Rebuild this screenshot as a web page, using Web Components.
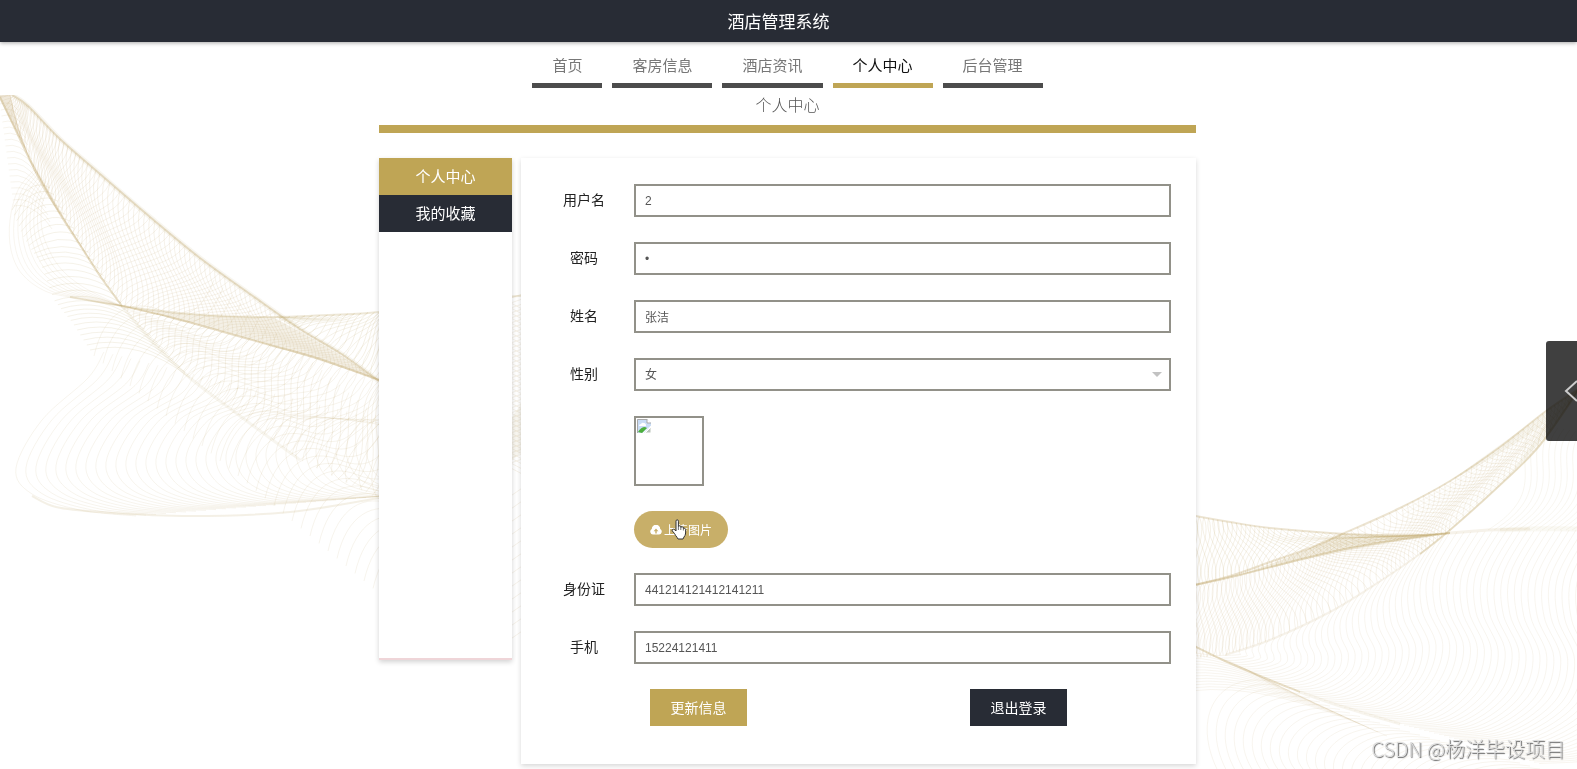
<!DOCTYPE html>
<html lang="zh-CN">
<head>
<meta charset="utf-8">
<meta name="viewport" content="width=device-width, initial-scale=1">
<title>酒店管理系统</title>
<style>
  :root {
    --gold: #bfa555;
    --dark: #282c35;
    --line: #929189;
    --sans: "Noto Sans CJK SC", "Noto Sans", sans-serif;
  }

  body {
    margin: 0;
    background: #fff;
    font-family: var(--sans);
  }

  main {
    width: 94%;
    max-width: 817px;
    margin: 0 auto;
    padding-right: 2px;
  }

  .columns {
    display: flex;
    align-items: flex-start;
    gap: 9px;
    padding-bottom: 5px;
  }

  form-card {
    flex: 1;
  }
</style>
</head>
<body>
  <wave-background></wave-background>
  <hotel-header>酒店管理系统</hotel-header>
  <main>
    <hotel-nav></hotel-nav>
    <page-title>个人中心</page-title>
    <div class="columns">
      <side-menu></side-menu>
      <form-card>
        <form-row label="用户名" value="2"></form-row>
        <form-row label="密码" type="password" value="2"></form-row>
        <form-row label="姓名" value="张洁"></form-row>
        <form-row label="性别" type="select" value="女" options="女,男"></form-row>
        <avatar-upload></avatar-upload>
        <form-row label="身份证" value="441214121412141211"></form-row>
        <form-row label="手机" value="15224121411"></form-row>
        <form-actions slot="actions"></form-actions>
      </form-card>
    </div>
  </main>
  <drawer-toggle></drawer-toggle>
  <water-mark>CSDN @杨洋毕设项目</water-mark>

<script>
// Shared helper: open shadow root filled from a template
function render(el, html) {
  const template = document.createElement('template');
  template.innerHTML = html;
  const root = el.attachShadow({ mode: 'open' });
  root.appendChild(template.content.cloneNode(true));
  return root;
}

/* ---------- Background ---------- */

// Smooth path through a list of points (Catmull-Rom to Bezier)
function smooth(pts) {
  let d = `M${pts[0][0].toFixed(1)} ${pts[0][1].toFixed(1)}`;
  for (let i = 0; i < pts.length - 1; i++) {
    const p0 = pts[i - 1] || pts[i];
    const p1 = pts[i];
    const p2 = pts[i + 1];
    const p3 = pts[i + 2] || p2;
    const c = [
      p1[0] + (p2[0] - p0[0]) / 6, p1[1] + (p2[1] - p0[1]) / 6,
      p2[0] - (p3[0] - p1[0]) / 6, p2[1] - (p3[1] - p1[1]) / 6,
      p2[0], p2[1]
    ];
    d += 'C' + c.map((n) => n.toFixed(1)).join(' ');
  }
  return d;
}

// Point on a polyline, t from 0 to 1
function at(pts, t) {
  const f = Math.max(0, Math.min(1, t)) * (pts.length - 1);
  const i = Math.min(pts.length - 2, Math.floor(f));
  const k = f - i;
  return [
    pts[i][0] + (pts[i + 1][0] - pts[i][0]) * k,
    pts[i][1] + (pts[i + 1][1] - pts[i][1]) * k
  ];
}

// Height of a left-to-right polyline at x
function heightAt(pts, x) {
  for (let i = 0; i < pts.length - 1; i++) {
    if (x <= pts[i + 1][0]) {
      const k = (x - pts[i][0]) / (pts[i + 1][0] - pts[i][0]);
      return pts[i][1] + (pts[i + 1][1] - pts[i][1]) * k;
    }
  }
  return pts[pts.length - 1][1];
}

// Threads that cross from edge a to edge b, leaning by `lean`, bent by `bow`
function threads(a, b, count, lean, bow) {
  let d = '';
  for (let i = 0; i <= count; i++) {
    const t = i / count;
    const p = at(a, t);
    const q = at(b, t + lean * Math.sin(Math.PI * t));
    const dx = q[0] - p[0];
    const dy = q[1] - p[1];
    const c1 = [p[0] + dx * 0.33 - dy * bow, p[1] + dy * 0.33 + dx * bow];
    const c2 = [p[0] + dx * 0.66 + dy * bow, p[1] + dy * 0.66 - dx * bow];
    d += `M${p[0].toFixed(1)} ${p[1].toFixed(1)}C${[...c1, ...c2, ...q].map((n) => n.toFixed(1)).join(' ')}`;
  }
  return d;
}

// Steps between two curves with the same number of points
function blend(a, b, count) {
  let d = '';
  for (let i = 0; i <= count; i++) {
    const t = i / count;
    d += smooth(a.map((p, k) => [p[0] + (b[k][0] - p[0]) * t, p[1] + (b[k][1] - p[1]) * t]));
  }
  return d;
}

function drawWaves() {
  const out = [];
  const line = (d, opacity, width = 1) =>
    out.push(`<path d="${d}" stroke-opacity="${opacity}" stroke-width="${width}"/>`);
  const fill = (d, opacity) =>
    out.push(`<path d="${d}" fill="#bfa56a" fill-opacity="${opacity}" stroke="none"/>`);

  // left ribbon
  const ridge = [[12, 95], [28, 106], [60, 139], [100, 174], [150, 217], [200, 258], [250, 294], [300, 329], [340, 353], [379, 381]];
  const spine = [[0, 97], [18, 135], [35, 170], [60, 214], [80, 245], [100, 276], [122, 306]];
  const under = [[0, 97], [35, 170], [60, 214], [90, 262], [122, 306], [170, 318], [220, 331], [270, 345], [320, 360], [379, 381]];
  const inner = [[10, 95], [18, 128], [30, 160], [42, 186], [60, 214]];
  line(threads(ridge, under, 90, 0.12, 0.16), 0.14);
  line(threads(ridge, under, 90, -0.12, -0.14), 0.13);
  line(smooth(ridge), 0.34, 2);
  line(smooth(ridge), 0.1, 5);
  line(smooth(spine), 0.36, 2);
  line(smooth(inner), 0.25);
  fill('M0 95L10 95Q24 160 60 214Q90 262 122 306Q60 220 0 100Z', 0.25);

  // arcs left of the spine
  let d = '';
  for (let i = 0; i < 18; i++) {
    d += `M${i * 0.8} ${104 + i * 6}Q${10 + i * 1.4} ${100 + i * 6} ${18 + i * 2} ${110 + i * 7}`;
  }
  line(d, 0.12);
  const blobOut = [[34, 170], [18, 190], [10, 220], [11, 250], [22, 274], [45, 291], [75, 298], [122, 306]];
  const blobIn = [[50, 185], [42, 205], [42, 230], [50, 252], [62, 270], [80, 285], [100, 296], [122, 306]];
  line(blend(blobOut, blobIn, 8), 0.11);
  const arcStart = [[12, 210], [25, 240], [40, 262], [54, 300], [72, 322], [90, 350]];
  const arcEnd = [[50, 188], [72, 225], [100, 270], [124, 308], [160, 345], [190, 378]];
  d = '';
  for (let i = 0; i <= 28; i++) {
    const p = at(arcStart, i / 28);
    const q = at(arcEnd, i / 28);
    d += `M${p[0]} ${p[1]}Q${p[0] + (q[0] - p[0]) * 0.5} ${Math.min(p[1], q[1]) - 12} ${q[0]} ${q[1]}`;
  }
  line(d, 0.15);

  // flat edge and its wedge
  const flat = [[70, 297], [122, 306], [170, 312], [220, 316], [275, 317], [330, 315], [379, 312], [450, 302], [530, 295]];
  const slope = [[122, 306], [170, 317], [220, 331], [270, 345], [320, 359], [379, 380]];
  line(smooth(flat), 0.26, 2);
  line(smooth(slope), 0.38, 2);
  fill('M122 306Q190 317 273 317Q325 345 379 380Q290 350 200 325Z', 0.17);
  const corner = [[275, 317], [300, 329], [340, 353], [379, 380]];
  line(threads([[275, 317], [330, 315], [379, 312], [400, 309]], corner, 22, 0.1, 0.15), 0.17);
  line(threads([[275, 317], [330, 315], [379, 312], [400, 309]], corner, 22, -0.2, -0.12), 0.15);

  // lower mesh
  const fold = [[122, 306], [155, 345], [190, 378], [240, 416], [300, 460], [392, 505]];
  line(threads([...slope, [400, 388]], fold, 44, 0.12, 0.22), 0.14);
  line(threads([...slope, [400, 388]], fold, 44, -0.14, -0.28), 0.12);
  line(smooth(fold.slice(0, 5)), 0.1, 3);

  // loops opening towards the panel
  d = '';
  for (let i = 0; i < 36; i++) {
    const x = 16 + i * 10;
    const y = 468 - i * 0.6;
    d += smooth([
      [104 + i * 9, 352 + i * 2.2],
      [88 + i * 9.4, 378 + i * 1.5],
      [42 + i * 9.8, 420],
      [x, y],
      [x + 16, 494 - i * 0.4],
      [x + 64, 510 - i * 0.5],
      [x + 120, 516 - i * 0.8]
    ]);
  }
  line(d, 0.12);
  line(smooth([[32, 496], [56, 507], [100, 512], [190, 516], [290, 512], [379, 498]]), 0.17, 2);

  // swirls and the tail
  d = '';
  for (let i = 0; i < 32; i++) {
    const x = 94 + i * 9;
    const y = 356 + i * 7.5;
    d += `M${x} ${y}C${x + 10} ${y - 44} ${x + 36} ${y - 58} ${x + 66} ${y - 46}S${x + 110} ${y - 50} ${x + 120} ${y - 76}`;
  }
  line(d, 0.12);

  // strip between the two panels
  d = '';
  for (let i = 0; i < 34; i++) {
    d += `M505 ${300 + i * 5}L528 ${292 + i * 5}M505 ${300 + i * 5}L528 ${312 + i * 5}`;
  }
  for (let i = 0; i < 12; i++) {
    d += `M505 ${500 + i * 13}L528 ${484 + i * 13}`;
  }
  line(d, 0.14);
  fill('M510 420L524 400V450L510 462Z', 0.1);

  // right ribbons
  const rTop = [[1190, 515], [1230, 522], [1270, 528], [1330, 533], [1380, 535], [1420, 535], [1450, 533]];
  const rMid = [[1190, 586], [1240, 575], [1290, 562], [1340, 550], [1390, 541], [1420, 537], [1450, 533]];
  line(threads(rTop, rMid, 52, 0.14, 0.16), 0.16);
  line(threads(rTop, rMid, 52, -0.14, -0.16), 0.16);
  line(smooth(rTop), 0.3, 2);
  line(smooth(rMid), 0.36, 2);
  line('M1450 533Q1490 529 1530 529', 0.14, 3);
  line('M1500 530Q1540 528 1577 529', 0.07, 5);
  fill('M1340 534Q1400 536 1450 533Q1330 550 1196 587Q1280 565 1340 534Z', 0.18);

  const rUp = [[1190, 586], [1230, 576], [1270, 562], [1310, 548], [1340, 535], [1400, 508], [1450, 481], [1500, 447], [1546, 411], [1580, 388]];
  const rLow = [[1180, 660], [1225, 655], [1270, 640], [1330, 612], [1385, 578], [1420, 554], [1450, 530], [1500, 485], [1540, 445], [1580, 388]];
  line(threads(rUp, rLow, 84, 0.12, 0.2), 0.14);
  line(threads(rUp, rLow, 84, -0.12, -0.2), 0.13);
  line(blend(rUp.slice(5), rLow.slice(5), 14), 0.07);
  line(smooth(rUp), 0.3, 2);
  line(smooth(rLow.slice(5)), 0.36, 2);
  line(smooth(rLow.slice(1, 6)), 0.14, 2);
  fill('M1450 481Q1520 430 1580 388Q1550 435 1500 485Q1530 450 1546 422Q1510 450 1450 481Z', 0.1);

  // long S lines that hang from the ribbon and run into the fan
  const fan = [[1190, 644], [1225, 661], [1260, 676], [1300, 692], [1340, 706], [1400, 724], [1460, 740], [1577, 775], [1700, 812]];
  const hang = [[1225, 655], [1270, 640], [1330, 612], [1385, 578], [1420, 554], [1450, 532], [1577, 530], [1700, 530]];
  d = '';
  for (let i = 0; i < 66; i++) {
    const x = 1240 + i * 7;
    const y = heightAt(hang, x);
    const endX = 1214 + i * 5;
    const endY = heightAt(fan, endX);
    const h = endY - y;
    d += smooth([
      [x, y],
      [x - h * 0.12, y + h * 0.22],
      [x - h * 0.12, y + h * 0.42],
      [x - h * 0.04, y + h * 0.62],
      [x - h * 0.1, y + h * 0.82],
      [endX + (x - endX) * 0.45, y + h * 0.97],
      [endX, endY]
    ]);
  }
  line(d, 0.11);
  d = '';
  for (let i = 0; i < 22; i++) {
    const x = 1468 + i * 6;
    d += `M${x + 66} ${424 + i}C${x + 40} 460 ${x + 84} 490 ${x + 20} 530`;
  }
  line(d, 0.1);

  // bottom fan
  line(smooth(fan.slice(0, 4)), 0.38, 2);
  line(smooth(fan.slice(3, 6)), 0.12, 3);
  d = '';
  for (let i = 0; i < 42; i++) {
    const x = 1200 + i * 9;
    const qx = 1240 + i * 10;
    const qy = heightAt(fan, qx) + 8;
    d += `M${qx + 30} ${qy + 6}C${x + 20} ${qy - 4} ${x - 12} ${qy + 40} ${x + 20} ${Math.max(775, qy + 60)}`;
  }
  for (let i = 0; i < 14; i++) {
    d += `M1190 ${652 + i * 3}Q${1230 + i * 3} ${655 + i * 2} ${1270 + i * 9} ${684 + i * 4}`;
  }
  line(d, 0.11);

  return out.join('');
}

class WaveBackground extends HTMLElement {
  connectedCallback() {
    render(this, `
      <style>
        :host { display: block; position: fixed; inset: 0; z-index: -1; }
        svg { display: block; width: 100%; height: 100%; }
      </style>
      <svg viewBox="0 0 1577 769" preserveAspectRatio="xMidYMin slice" aria-hidden="true">
        <defs><clipPath id="art"><rect y="95" width="1577" height="674"/></clipPath></defs>
        <g fill="none" stroke="#bfa56a" clip-path="url(#art)">${drawWaves()}</g>
      </svg>
    `);
  }
}

/* ---------- Header and navigation ---------- */

class HotelHeader extends HTMLElement {
  connectedCallback() {
    render(this, `
      <style>
        :host { display: block; }
        header {
          padding-right: 20px;
          background: var(--dark);
          color: #fff;
          text-align: center;
          box-shadow: 0 1px 4px rgba(0, 0, 0, 0.35);
        }
        h1 { margin: 0; font-size: 17px; font-weight: 400; line-height: 42px; }
      </style>
      <header><h1><slot></slot></h1></header>
    `);
  }
}

class HotelNav extends HTMLElement {
  connectedCallback() {
    const items = ['首页', '客房信息', '酒店资讯', '个人中心', '后台管理'];
    const links = items.map((text) =>
      `<a href="#" ${text === '个人中心' ? 'aria-current="page"' : ''}>${text}</a>`).join('');
    render(this, `
      <style>
        :host { display: block; }
        nav {
          display: flex;
          flex-wrap: wrap;
          justify-content: center;
          gap: 10px;
          padding-top: 8px;
        }
        a {
          padding: 0 20px 4px;
          border-bottom: 5px solid #4c4c4c;
          color: #777;
          font-size: 15px;
          line-height: 29px;
          text-decoration: none;
        }
        a[aria-current] { color: #111; border-color: var(--gold); }
      </style>
      <nav>${links}</nav>
    `);
  }
}

class PageTitle extends HTMLElement {
  connectedCallback() {
    render(this, `
      <style>
        :host { display: block; margin-bottom: 25px; border-bottom: 8px solid var(--gold); }
        h2 {
          margin: 0;
          padding-bottom: 4px;
          color: #555;
          font-size: 16px;
          font-weight: 300;
          line-height: 33px;
          text-align: center;
        }
      </style>
      <h2><slot></slot></h2>
    `);
  }
}

class SideMenu extends HTMLElement {
  connectedCallback() {
    render(this, `
      <style>
        :host { display: block; flex: 0 0 133px; }
        nav {
          min-height: 500px;
          background: #fff;
          border-bottom: 2px solid #efd5d8;
          box-shadow: 0 2px 5px rgba(0, 0, 0, 0.18);
        }
        a {
          display: block;
          padding-bottom: 2px;
          background: var(--dark);
          color: #fff;
          font-size: 15px;
          line-height: 35px;
          text-align: center;
          text-decoration: none;
        }
        a[aria-current] { background: var(--gold); }
      </style>
      <nav>
        <a href="#" aria-current="page">个人中心</a>
        <a href="#">我的收藏</a>
      </nav>
    `);
  }
}

/* ---------- Form ---------- */

class FormCard extends HTMLElement {
  connectedCallback() {
    render(this, `
      <style>
        :host { display: block; }
        form {
          display: flex;
          flex-direction: column;
          gap: 25px;
          padding: 26px 25px 38px;
          background: #fff;
          box-shadow: 0 2px 5px rgba(0, 0, 0, 0.16);
        }
      </style>
      <form>
        <slot></slot>
        <slot name="actions"></slot>
      </form>
    `);
  }
}

class FormRow extends HTMLElement {
  connectedCallback() {
    const type = this.getAttribute('type') || 'text';
    const value = this.getAttribute('value');
    let control = `<input id="field" type="${type}" value="${value}" autocomplete="off">`;
    if (type === 'select') {
      const options = this.getAttribute('options').split(',').map((o) =>
        `<option ${o === value ? 'selected' : ''}>${o}</option>`).join('');
      control = `
        <select id="field">${options}</select>
        <svg width="10" height="5" viewBox="0 0 10 5" aria-hidden="true"><path d="M0 0h10L5 5z" fill="#c2c2c2"/></svg>
      `;
    }
    render(this, `
      <style>
        :host { display: flex; align-items: center; gap: 12px; }
        label {
          flex: 0 0 76px;
          padding-bottom: 2px;
          color: #222;
          font-size: 14px;
          line-height: 31px;
          text-align: center;
        }
        .control { position: relative; display: flex; flex: 1; }
        input, select {
          box-sizing: border-box;
          width: 100%;
          height: 33px;
          margin: 0;
          padding: 0 9px;
          border: 2px solid var(--line);
          border-radius: 0;
          outline: none;
          background: #fff;
          color: #555;
          font: 12px "Liberation Sans", "Noto Sans CJK SC", sans-serif;
          appearance: none;
        }
        svg { position: absolute; right: 9px; top: 14px; pointer-events: none; }
      </style>
      <label for="field">${this.getAttribute('label')}</label>
      <div class="control">${control}</div>
    `);
  }
}

class AvatarUpload extends HTMLElement {
  connectedCallback() {
    render(this, `
      <style>
        :host {
          display: flex;
          flex-direction: column;
          align-items: flex-start;
          gap: 25px;
          padding-left: 88px;
        }
        .preview {
          box-sizing: border-box;
          width: 70px;
          height: 70px;
          border: 2px solid var(--line);
        }
        .preview svg { display: block; margin: 1px; }
        button {
          position: relative;
          display: flex;
          align-items: center;
          gap: 2px;
          height: 37px;
          padding: 0 16px;
          border: 0;
          border-radius: 19px;
          background: #c8af69;
          color: #fff;
          font: 12px var(--sans);
          cursor: pointer;
        }
        .pointer { position: absolute; left: 37px; top: 8px; }
      </style>
      <div class="preview">
        <svg width="14" height="14" viewBox="0 0 14 14" role="img" aria-label="">
          <path d="M0 0h10l4 4v4l-7 6H0z" fill="#c9dcf5"/>
          <path d="M2 7q0-2 2-2 1-2 3-1 2 0 2 3z" fill="#fff"/>
          <path d="M1 13q3-5 7-5l2 1-5 5z" fill="#4caf3c"/>
          <path d="M14 8v6H8zM6 14l8-7" fill="#b9c3ba" stroke="#fff"/>
          <path d="M10 0v4h4" fill="#fff" stroke="#a9a9a9"/>
          <path d="M.5 14V.5H10" fill="none" stroke="#a9a9a9"/>
        </svg>
      </div>
      <button type="button">
        <svg width="12" height="10" viewBox="0 0 12 10" aria-hidden="true">
          <path d="M3 9.500A3 3 0 0 1 1.800 3.900 4.200 4.200 0 0 1 10.200 3.900 3 3 0 0 1 9 9.500H3z" fill="#fff"/>
          <path d="M6 3.500L3.600 6.200H5.300V8.500H6.700V6.200H8.400z" fill="#c8af69"/>
        </svg>
        <span>上传图片</span>
        <svg class="pointer" width="17" height="21" viewBox="0 0 17 21" aria-hidden="true">
          <path d="M5 12V2.200Q5 .8 6.200 .8T7.400 2.200V7.500Q8.400 6.300 9.800 7.300V8.200Q11 7.200 12.400 8.300V9.200Q14 8.600 14.600 10.400V14Q14.500 16.500 13 18L12 20H7L6 18.300Q4.500 16.600 3.500 14.500L1.200 11.800Q.8 10.300 2.600 10.200Q4 10.700 5 12z" fill="#fff" stroke="#333" stroke-linejoin="round"/>
          <path d="M7.400 7.500V11M9.800 8V11M12.400 9V11.500" fill="none" stroke="#333" stroke-opacity=".7"/>
        </svg>
      </button>
    `);
  }
}

class FormActions extends HTMLElement {
  connectedCallback() {
    render(this, `
      <style>
        :host { display: flex; justify-content: space-between; padding: 0 104px; }
        button {
          width: 97px;
          height: 37px;
          padding: 0 0 2px;
          border: 0;
          background: var(--gold);
          color: #fff;
          font: 14px var(--sans);
          cursor: pointer;
        }
        .logout { background: var(--dark); }
      </style>
      <button type="button">更新信息</button>
      <button type="button" class="logout">退出登录</button>
    `);
  }
}

/* ---------- Overlays ---------- */

class DrawerToggle extends HTMLElement {
  connectedCallback() {
    render(this, `
      <style>
        :host { display: block; position: fixed; right: 0; top: 341px; }
        button {
          display: flex;
          align-items: center;
          justify-content: flex-end;
          width: 31px;
          height: 100px;
          padding: 0;
          border: 0;
          border-radius: 3px 0 0 3px;
          background: rgba(0, 0, 0, 0.75);
        }
      </style>
      <button type="button" aria-label="展开">
        <svg width="13" height="22" viewBox="0 0 13 22"><path d="M13 1L2 11l11 10" fill="none" stroke="#ccc" stroke-width="2"/></svg>
      </button>
    `);
  }
}

class WaterMark extends HTMLElement {
  connectedCallback() {
    render(this, `
      <style>
        :host {
          display: block;
          position: fixed;
          right: 12px;
          bottom: 5px;
          color: #ddd;
          font-size: 20px;
          font-weight: 300;
          line-height: 30px;
          text-shadow: 1px 1px 1px #666;
        }
      </style>
      <slot></slot>
    `);
  }
}

customElements.define('wave-background', WaveBackground);
customElements.define('hotel-header', HotelHeader);
customElements.define('hotel-nav', HotelNav);
customElements.define('page-title', PageTitle);
customElements.define('side-menu', SideMenu);
customElements.define('form-card', FormCard);
customElements.define('form-row', FormRow);
customElements.define('avatar-upload', AvatarUpload);
customElements.define('form-actions', FormActions);
customElements.define('drawer-toggle', DrawerToggle);
customElements.define('water-mark', WaterMark);
</script>
</body>
</html>
